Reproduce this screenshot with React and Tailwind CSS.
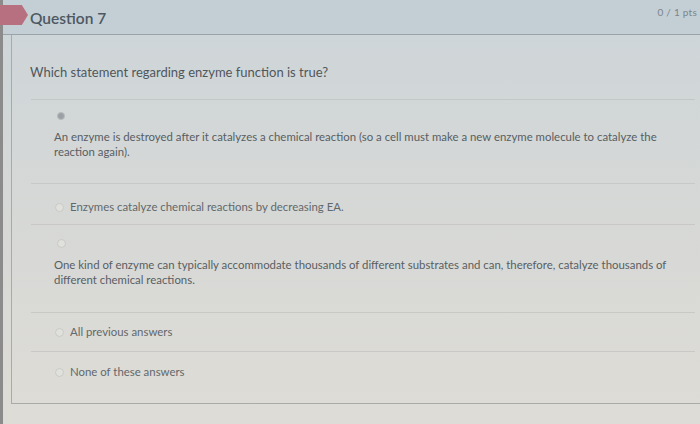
import React from "react";

const answers = [
  {
    id: 1,
    selected: true,
    stacked: true,
    pad: "pt-[12px] pb-[24px]",
    text: "An enzyme is destroyed after it catalyzes a chemical reaction (so a cell must make a new enzyme molecule to catalyze the reaction again).",
  },
  { id: 2, pad: "pt-[16px] pb-[10px]", text: "Enzymes catalyze chemical reactions by decreasing EA." },
  {
    id: 3,
    stacked: true,
    pad: "pt-[14px] pb-[25px]",
    text: "One kind of enzyme can typically accommodate thousands of different substrates and can, therefore, catalyze thousands of different chemical reactions.",
  },
  { id: 4, pad: "pt-[12px] pb-[12px]", text: "All previous answers" },
  { id: 5, pad: "pt-[13px] pb-[12px]", text: "None of these answers" },
];

const Radio = ({ selected }) => (
  <span
    className={
      selected
        ? "block w-[8px] h-[8px] rounded-full bg-[#9aa0a4] border border-[#b7bbbd] shrink-0"
        : "block w-[9px] h-[9px] rounded-full bg-[#e0e0dc] border border-[#c9cac7] shrink-0"
    }
  />
);

const App = () => {
  return (
    <div className="w-[700px] h-[424px] flex overflow-hidden font-['Lato','Open_Sans',sans-serif] bg-linear-to-b from-[#cdd5d9] via-[#d6d8d6] to-[#dedcd6]">
      {/* window edge */}
      <div className="w-[3px] h-full bg-[#8b8b8b]" />

      <div className="flex-1 flex flex-col">
        {/* header */}
        <div className="relative h-[35px] border-b border-[#9aa3a8] bg-[#c4cfd5] flex items-start">
          <div className="absolute left-[-3px] top-[5px] w-[28px] h-[20px] bg-[#b7707f] [clip-path:polygon(0_0,78%_0,100%_50%,78%_100%,0_100%)]" />
          <h2 className="ml-[27px] mt-[8px] text-[15.5px] leading-[20px] font-semibold text-[#4d5862]">
            Question 7
          </h2>
          <span className="ml-auto mr-[3px] mt-[6px] text-[10px] leading-[12px] text-[#7b858c] tracking-wide">
            0 / 1 pts
          </span>
        </div>

        {/* question box */}
        <div className="ml-[8px] h-[369px] border-l border-b border-[#a9abaa] flex flex-col">
          <p className="ml-[18px] mt-[29px] text-[13px] leading-[17px] text-[#4f575d]">
            Which statement regarding enzyme function is true?
          </p>

          <div className="mt-[18px] ml-[19px] mr-[5px] border-t border-[#c3c6c6]" />

          <div className="flex flex-col">
            {answers.map((a, i) => (
              <div
                key={a.id}
                className={
                  "ml-[19px] mr-[5px] " +
                  (i < answers.length - 1 ? "border-b border-[#c8c9c7]" : "")
                }
              >
                {a.stacked ? (
                  <div className={"pl-[23px] pr-[28px] " + a.pad}>
                    <div className="ml-[3px]">
                      <Radio selected={a.selected} />
                    </div>
                    <p className="mt-[9px] text-[11.4px] leading-[15px] text-[#585e63]">
                      {a.text}
                    </p>
                  </div>
                ) : (
                  <div className={"pl-[24px] flex items-center gap-[6px] " + a.pad}>
                    <Radio />
                    <span className="text-[11.4px] leading-[14px] text-[#62686c]">
                      {a.text}
                    </span>
                  </div>
                )}
              </div>
            ))}
          </div>
        </div>
      </div>
    </div>
  );
};

export default App;
